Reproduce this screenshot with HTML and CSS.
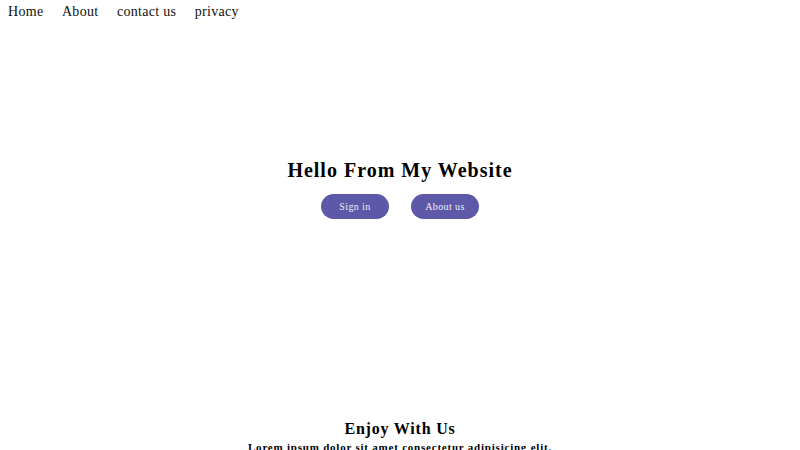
FILE: index.html
```html
<!DOCTYPE html>
<html>
<head>
<meta charset="utf-8">
<link rel="stylesheet" href="styles.css">
</head>
<body>
<nav class="nav">
  <a class="nav-link" href="#">Home</a>
  <a class="nav-link" href="#">About</a>
  <a class="nav-link" href="#">contact us</a>
  <a class="nav-link" href="#">privacy</a>
</nav>
<section class="hero">
  <h1 class="hero-title">Hello From My Website</h1>
  <div class="hero-buttons">
    <button class="btn">Sign in</button>
    <button class="btn">About us</button>
  </div>
</section>
<section class="enjoy">
  <h2 class="enjoy-title">Enjoy With Us</h2>
  <p class="enjoy-text">Lorem ipsum dolor sit amet consectetur adipisicing elit.</p>
</section>
</body>
</html>
```
FILE: styles.css
```css
html, body {
  margin: 0;
  padding: 0;
  background: #fff;
  font-family: "Liberation Serif", "Times New Roman", serif;
  color: #000;
  overflow: hidden;
}
.nav {
  display: flex;
  gap: 18.5px;
  padding: 3px 8px 0;
}
.nav-link {
  font-size: 14px;
  letter-spacing: 0.3px;
  color: #111;
  text-decoration: none;
  line-height: 17px;
}
.hero {
  height: 336px;
  display: flex;
  flex-direction: column;
  align-items: center;
  justify-content: center;
}
.hero-title {
  margin: 0 0 12px;
  font-size: 20px;
  letter-spacing: 1px;
  font-weight: bold;
  line-height: 24px;
}
.hero-buttons {
  display: flex;
  gap: 22px;
}
.btn {
  width: 68px;
  height: 25px;
  border: none;
  border-radius: 13px;
  background: #5d59a8;
  color: #eeeef6;
  font-family: "Liberation Serif", "Times New Roman", serif;
  font-weight: normal;
  font-size: 10px;
  letter-spacing: 0.4px;
  padding: 0;
}
.enjoy {
  text-align: center;
  margin-top: 63px;
}
.enjoy-title {
  margin: 0;
  font-size: 16px;
  letter-spacing: 0.8px;
  line-height: 20px;
}
.enjoy-text {
  margin: 2px 0 0;
  font-size: 11px;
  font-weight: bold;
  letter-spacing: 0.78px;
}
```
